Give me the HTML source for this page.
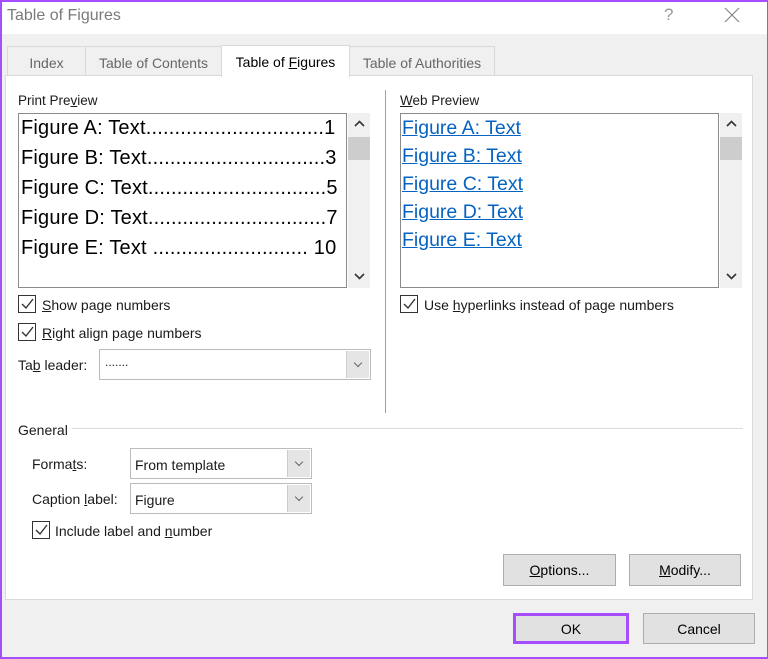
<!DOCTYPE html>
<html><head><style>
*{box-sizing:border-box;margin:0;padding:0}
body{width:768px;height:659px;position:relative;overflow:hidden;background:#f0f0f0;font-family:"Liberation Sans",sans-serif;font-size:14px;color:#1a1a1a}
.a{position:absolute}
.frame{left:0;top:0;width:768px;height:659px;border:2px solid #a64dff;border-right-width:1px}
.title{left:0;top:0;width:768px;height:34px;background:#fff}
.tab{top:46px;height:30px;border:1px solid #d9d9d9;border-bottom:none;background:#f0f0f0;color:#666;text-align:center;line-height:32px;font-size:14px}
.panel{left:5px;top:75px;width:748px;height:525px;background:#fff;border:1px solid #d9d9d9}
.box{background:#fff;border:1px solid #8a8a8a}
.sb{background:#f0f0f0}
.thumb{background:#cdcdcd}
.pl{font-size:20px;color:#000;left:21px;white-space:pre;letter-spacing:0.2px}
.wl{font-size:19.5px;color:#0563c1;text-decoration:underline;left:402px}
.cb{width:18px;height:18px;border:1px solid #333;background:#fff}
.cb svg{position:absolute;left:2px;top:2px}
.combo{background:#fff;border:1px solid #bcbcbc}
.dd{position:absolute;right:1px;top:1px;bottom:1px;width:23px;background:#e5e5e5;border-left:1px solid #ccc}
.dd:after{content:"";position:absolute;left:8px;top:9px;width:5px;height:5px;border-right:1px solid #666;border-bottom:1px solid #666;transform:rotate(45deg)}
.btn{background:#e1e1e1;border:1px solid #adadad;text-align:center;color:#000}
</style></head><body>
<div class="a title"></div>
<div class="a" style="left:7px;top:7px;font-size:16px;color:#7a7a7a">Table of Figures</div>
<div class="a" style="left:664px;top:5px;font-size:17px;color:#999">?</div>
<svg class="a" style="left:724px;top:7px" width="16" height="16"><path d="M1 1L15 15M15 1L1 15" stroke="#888" stroke-width="1.2"/></svg>

<div class="a tab" style="left:7px;width:79px">Index</div>
<div class="a tab" style="left:85px;width:137px">Table of Contents</div>
<div class="a tab" style="left:349px;width:146px">Table of Authorities</div>
<div class="a panel"></div>
<div class="a tab" style="left:221px;top:45px;width:129px;height:32px;background:#fff;color:#000;border-color:#d9d9d9">Table of <u>F</u>igures</div>

<div class="a" style="left:18px;top:93px;font-size:13.5px">Print Pre<u>v</u>iew</div>
<div class="a box" style="left:18px;top:113px;width:329px;height:175px"></div>
<div class="a sb" style="left:348px;top:113px;width:22px;height:175px"></div>
<div class="a thumb" style="left:348px;top:137px;width:22px;height:23px"></div>
<svg class="a" style="left:354px;top:120px" width="11" height="8"><path d="M1 6L5.5 1.5L10 6" stroke="#333" stroke-width="1.6" fill="none"/></svg>
<svg class="a" style="left:354px;top:272px" width="11" height="8"><path d="M1 2L5.5 6.5L10 2" stroke="#333" stroke-width="1.6" fill="none"/></svg>
<div class="a pl" style="top:117px">Figure A: Text...............................1</div>
<div class="a pl" style="top:147px">Figure B: Text...............................3</div>
<div class="a pl" style="top:177px">Figure C: Text...............................5</div>
<div class="a pl" style="top:207px">Figure D: Text...............................7</div>
<div class="a pl" style="top:237px">Figure E: Text ........................... 10</div>

<div class="a" style="left:385px;top:90px;width:1px;height:323px;background:#a0a0a0"></div>

<div class="a" style="left:400px;top:93px;font-size:13.5px"><u>W</u>eb Preview</div>
<div class="a box" style="left:400px;top:113px;width:319px;height:175px"></div>
<div class="a sb" style="left:720px;top:113px;width:22px;height:175px"></div>
<div class="a thumb" style="left:720px;top:137px;width:22px;height:23px"></div>
<svg class="a" style="left:726px;top:120px" width="11" height="8"><path d="M1 6L5.5 1.5L10 6" stroke="#333" stroke-width="1.6" fill="none"/></svg>
<svg class="a" style="left:726px;top:272px" width="11" height="8"><path d="M1 2L5.5 6.5L10 2" stroke="#333" stroke-width="1.6" fill="none"/></svg>
<div class="a wl" style="top:117px">Figure A: Text</div>
<div class="a wl" style="top:145px">Figure B: Text</div>
<div class="a wl" style="top:173px">Figure C: Text</div>
<div class="a wl" style="top:201px">Figure D: Text</div>
<div class="a wl" style="top:229px">Figure E: Text</div>

<div class="a cb" style="left:18px;top:295px"><svg width="13" height="12"><path d="M1 6L5 10L12 1" stroke="#333" stroke-width="1.4" fill="none"/></svg></div>
<div class="a" style="left:42px;top:297px"><u>S</u>how page numbers</div>
<div class="a cb" style="left:18px;top:323px"><svg width="13" height="12"><path d="M1 6L5 10L12 1" stroke="#333" stroke-width="1.4" fill="none"/></svg></div>
<div class="a" style="left:42px;top:325px"><u>R</u>ight align page numbers</div>
<div class="a cb" style="left:400px;top:295px"><svg width="13" height="12"><path d="M1 6L5 10L12 1" stroke="#333" stroke-width="1.4" fill="none"/></svg></div>
<div class="a" style="left:424px;top:297px">Use <u>h</u>yperlinks instead of page numbers</div>

<div class="a" style="left:18px;top:357px">Ta<u>b</u> leader:</div>
<div class="a combo" style="left:99px;top:349px;width:272px;height:31px"><div class="dd"></div><span style="position:absolute;left:5px;top:5px;font-size:12px">.......</span></div>

<div class="a" style="left:18px;top:422px">General</div>
<div class="a" style="left:72px;top:428px;width:671px;height:1px;background:#dcdcdc"></div>
<div class="a" style="left:32px;top:456px">Forma<u>t</u>s:</div>
<div class="a combo" style="left:130px;top:448px;width:182px;height:31px"><div class="dd"></div><span style="position:absolute;left:4px;top:8px">From template</span></div>
<div class="a" style="left:32px;top:491px">Caption <u>l</u>abel:</div>
<div class="a combo" style="left:130px;top:483px;width:182px;height:31px"><div class="dd"></div><span style="position:absolute;left:4px;top:8px">Figure</span></div>
<div class="a cb" style="left:32px;top:521px"><svg width="13" height="12"><path d="M1 6L5 10L12 1" stroke="#333" stroke-width="1.4" fill="none"/></svg></div>
<div class="a" style="left:55px;top:523px">Include label and <u>n</u>umber</div>

<div class="a btn" style="left:503px;top:554px;width:113px;height:32px;line-height:31px"><u>O</u>ptions...</div>
<div class="a btn" style="left:629px;top:554px;width:112px;height:32px;line-height:31px"><u>M</u>odify...</div>

<div class="a btn" style="left:513px;top:613px;width:116px;height:31px;line-height:27px;border:3px solid #a64dff">OK</div>
<div class="a btn" style="left:643px;top:613px;width:112px;height:31px;line-height:31px">Cancel</div>
<div class="a frame"></div>
</body></html>
